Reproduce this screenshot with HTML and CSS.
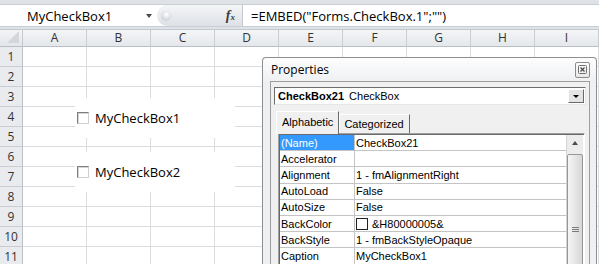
FILE: index.html
```html
<!DOCTYPE html>
<html lang="en">
<head>
  <meta charset="UTF-8">
  <title>Properties - CheckBox21</title>
  <link rel="stylesheet" href="styles.css">
</head>
<body>

<div class="top">
  <div class="bar">
    <div class="namebox">MyCheckBox1<span class="drop"></span></div>
    <div class="fxzone"><span class="knob"></span><span class="fx">f<span>x</span></span></div>
    <div class="formula">=EMBED("Forms.CheckBox.1";"")</div>
  </div>
</div>

<div class="sheet">
  <div class="corner">
    <svg width="12" height="12" viewBox="0 0 12 12"><polygon points="12,0 12,12 0,12" fill="#d3d7dc"/></svg>
  </div>
  <div class="cols">
    <div class="colhead">A</div>
    <div class="colhead">B</div>
    <div class="colhead">C</div>
    <div class="colhead">D</div>
    <div class="colhead">E</div>
    <div class="colhead">F</div>
    <div class="colhead">G</div>
    <div class="colhead">H</div>
    <div class="colhead">I</div>
  </div>
  <div class="rows">
    <div class="rowhead">1</div>
    <div class="rowhead">2</div>
    <div class="rowhead">3</div>
    <div class="rowhead">4</div>
    <div class="rowhead">5</div>
    <div class="rowhead">6</div>
    <div class="rowhead">7</div>
    <div class="rowhead">8</div>
    <div class="rowhead">9</div>
    <div class="rowhead">10</div>
    <div class="rowhead">11</div>
  </div>
  <div class="cells"></div>
</div>

<!-- controles ActiveX sobre la hoja -->
<div class="ctl ctl-1"><span class="box"></span>MyCheckBox1</div>
<div class="ctl ctl-2"><span class="box"></span>MyCheckBox2</div>

<div class="props">
  <div class="title">
    <span>Properties</span>
    <span class="close">
      <svg width="9" height="9" viewBox="0 0 9 9"><rect x="0.5" y="0.5" width="8" height="8" rx="1" fill="none" stroke="#6f6f6f"/><path d="M2.5 2.5 L6.5 6.5 M6.5 2.5 L2.5 6.5" stroke="#4a4a4a" stroke-width="1.2"/></svg>
    </span>
  </div>
  <div class="panel">
    <div class="combo"><b>CheckBox21</b> CheckBox<span class="combo-btn"><span class="tri"></span></span></div>
    <div class="tabs">
      <div class="tab active">Alphabetic</div>
      <div class="tab">Categorized</div>
    </div>
    <div class="list">
      <div class="entries">
        <div class="row selected"><span class="name">(Name)</span><span class="val">CheckBox21</span></div>
        <div class="row"><span class="name">Accelerator</span><span class="val"></span></div>
        <div class="row"><span class="name">Alignment</span><span class="val">1 - fmAlignmentRight</span></div>
        <div class="row"><span class="name">AutoLoad</span><span class="val">False</span></div>
        <div class="row"><span class="name">AutoSize</span><span class="val">False</span></div>
        <div class="row"><span class="name">BackColor</span><span class="val"><span class="swatch"></span>&amp;H80000005&amp;</span></div>
        <div class="row"><span class="name">BackStyle</span><span class="val">1 - fmBackStyleOpaque</span></div>
        <div class="row"><span class="name">Caption</span><span class="val">MyCheckBox1</span></div>
      </div>
      <div class="scroll">
        <div class="up"><span class="tri-up"></span></div>
        <div class="thumb"><span class="grip"></span></div>
      </div>
    </div>
  </div>
</div>

</body>
</html>
```

FILE: styles.css
```css
body {
  margin: 0;
  width: 599px;
  height: 264px;
  overflow: hidden;
  position: relative;
  background-color: white;
  font-family: "Open Sans", sans-serif;
  color: #000;
}

/* barra de formulas */
.top {
  height: 30px;
  box-sizing: border-box;
  padding-top: 4px;
  background-color: #dfe3e8;
  border-bottom: 1px solid #c3c8ce;
}
.bar {
  display: flex;
  height: 23px;
  box-sizing: border-box;
  background-color: white;
  border-top: 1px solid #c9ced4;
  border-bottom: 1px solid #c9ced4;
}
.namebox {
  width: 157px;
  box-sizing: border-box;
  padding-left: 27px;
  display: flex;
  align-items: center;
  font-size: 13px;
}
.drop {
  margin-left: auto;
  margin-right: 5px;
  width: 0;
  height: 0;
  border-left: 3.5px solid transparent;
  border-right: 3.5px solid transparent;
  border-top: 4px solid #4a4a4a;
}
.fxzone {
  width: 86px;
  box-sizing: border-box;
  display: flex;
  align-items: center;
  justify-content: space-between;
  padding: 0 7px 0 4px;
  background: linear-gradient(#f4f5f7, #dde1e6);
  border-radius: 11px 0 0 11px;
  border-right: 1px solid #c4c9cf;
}
.knob {
  width: 10px;
  height: 10px;
  border-radius: 50%;
  background: radial-gradient(circle at 55% 35%, #ffffff, #c9ced4 80%);
}
.fx {
  font-family: "Liberation Serif", serif;
  font-style: italic;
  font-weight: bold;
  font-size: 14px;
  color: #3c3c3c;
}
.fx span {
  font-size: 9px;
}
.formula {
  flex: 1;
  padding-left: 8px;
  display: flex;
  align-items: center;
  font-size: 13px;
}

/* hoja */
.sheet {
  display: grid;
  grid-template-columns: 23px 576px;
  grid-template-rows: 17px 217px;
}
.corner {
  box-sizing: border-box;
  display: flex;
  align-items: flex-end;
  justify-content: flex-end;
  padding: 0 3px 3px 0;
  background: linear-gradient(#f3f4f6, #e3e6ea);
  border-right: 1px solid #c4c9cf;
  border-bottom: 1px solid #b9bfc6;
}
.cols {
  display: flex;
}
.colhead {
  width: 64px;
  box-sizing: border-box;
  text-align: center;
  font-size: 12px;
  line-height: 16px;
  color: #333;
  background: linear-gradient(#f4f5f7, #e4e7eb);
  border-right: 1px solid #c9cdd2;
  border-bottom: 1px solid #b9bfc6;
}
.rows {
  display: flex;
  flex-direction: column;
  overflow: hidden;
}
.rowhead {
  height: 20px;
  flex: none;
  box-sizing: border-box;
  text-align: center;
  font-size: 12px;
  line-height: 19px;
  color: #333;
  background-color: #e9ebee;
  border-right: 1px solid #b9bfc6;
  border-bottom: 1px solid #c9cdd2;
}
.cells {
  background-image:
    repeating-linear-gradient(to right, transparent 0 63px, #dadcdf 63px 64px),
    repeating-linear-gradient(to bottom, transparent 0 19px, #dadcdf 19px 20px);
}

/* casillas */
.ctl {
  position: absolute;
  left: 75px;
  width: 160px;
  height: 40px;
  box-sizing: border-box;
  padding-left: 2px;
  display: flex;
  align-items: center;
  gap: 6px;
  background-color: white;
  font-size: 13px;
}
.ctl-1 { top: 98px; }
.ctl-2 { top: 152px; }
.box {
  width: 12px;
  height: 12px;
  box-sizing: border-box;
  border: 1px solid;
  border-color: #7d7d7d #cfcfcf #cfcfcf #7d7d7d;
  box-shadow: inset 1px 1px 0 #d6d6d6;
}

/* ventana de propiedades */
.props {
  position: absolute;
  left: 262px;
  top: 57px;
  width: 335px;
  height: 207px;
  box-sizing: border-box;
  padding: 0 6px 0 7px;
  border: 1px solid #8e8f91;
  border-bottom: none;
  border-radius: 4px 4px 0 0;
  background: linear-gradient(#fdfdfd, #eef0f2 24px);
  font-family: "Liberation Sans", Arial, sans-serif;
  font-size: 11px;
}
.title {
  height: 23px;
  display: flex;
  align-items: center;
  justify-content: space-between;
  padding-left: 1px;
  font-family: "Open Sans", sans-serif;
  font-size: 12px;
}
.close {
  width: 15px;
  height: 16px;
  box-sizing: border-box;
  display: flex;
  align-items: center;
  justify-content: center;
  border: 1px solid #8c8c8c;
  border-radius: 2px;
  background: linear-gradient(#ffffff, #e8e8e8);
}
.panel {
  height: 183px;
  box-sizing: border-box;
  padding: 5px 3px 0;
  border: 1px solid #9d9d9d;
  border-bottom: none;
  background-color: #f0f0f0;
}
.combo {
  height: 18px;
  box-sizing: border-box;
  display: flex;
  align-items: center;
  padding-left: 3px;
  background-color: white;
  border: 1px solid;
  border-color: #6d6d6d #e6e6e6 #e6e6e6 #6d6d6d;
  white-space: pre;
}
.combo b {
  margin-right: 2px;
}
.combo-btn {
  margin-left: auto;
  margin-right: 1px;
  width: 16px;
  height: 14px;
  box-sizing: border-box;
  display: flex;
  align-items: center;
  justify-content: center;
  background-color: #e4e4e4;
  border: 1px solid;
  border-color: #ffffff #6a6a6a #6a6a6a #ffffff;
}
.tri {
  width: 0;
  height: 0;
  border-left: 3px solid transparent;
  border-right: 3px solid transparent;
  border-top: 3px solid #000;
}
.tabs {
  height: 28px;
  display: flex;
  align-items: flex-end;
  padding-left: 2px;
  position: relative;
  z-index: 1;
}
.tab {
  height: 19px;
  box-sizing: border-box;
  padding: 3px 5px 0 4px;
  border: 1px solid;
  border-color: #ffffff #6a6a6a transparent #ffffff;
  border-bottom: none;
  background-color: #f0f0f0;
}
.tab.active {
  height: 23px;
  padding: 4px 5px 0 5px;
  margin-bottom: -1px;
}
.list {
  margin: 0 1px 0 4px;
  height: 132px;
  box-sizing: border-box;
  display: flex;
  padding: 1px 1px 0 1px;
  border: 1px solid;
  border-color: #a0a0a0 #ffffff #ffffff #a0a0a0;
  border-bottom: none;
  box-shadow: inset 1px 1px 0 #696969;
  background-color: white;
}
.entries {
  flex: 1;
}
.row {
  display: grid;
  grid-template-columns: 75px 1fr;
  height: 16.2px;
}
.row span.name,
.row span.val {
  box-sizing: border-box;
  border-bottom: 1px solid #c4c4c4;
  display: flex;
  align-items: center;
  white-space: nowrap;
}
.name {
  padding-left: 1px;
  border-right: 1px solid #c4c4c4;
}
.val {
  padding-left: 1px;
}
.selected .name {
  background-color: #3399ff;
  color: white;
}
.swatch {
  width: 12px;
  height: 12px;
  box-sizing: border-box;
  margin-right: 4px;
  border: 1px solid #222;
  background-color: white;
}
.scroll {
  width: 17px;
  background-color: #ececec;
  border-left: 1px solid #d4d4d4;
  box-sizing: border-box;
  overflow: hidden;
}
.up {
  height: 16px;
  display: flex;
  align-items: center;
  justify-content: center;
}
.tri-up {
  width: 0;
  height: 0;
  border-left: 3.5px solid transparent;
  border-right: 3.5px solid transparent;
  border-bottom: 4px solid #4a4a4a;
}
.thumb {
  margin-top: 3px;
  height: 150px;
  box-sizing: border-box;
  display: flex;
  align-items: center;
  justify-content: center;
  border: 1px solid #979797;
  border-radius: 2px;
  background: linear-gradient(to right, #f6f6f6, #e6e6e6 50%, #d7d7d7);
}
.grip {
  width: 7px;
  height: 5px;
  background: repeating-linear-gradient(to bottom, #7a7a7a 0 1px, transparent 1px 2px);
}
```
